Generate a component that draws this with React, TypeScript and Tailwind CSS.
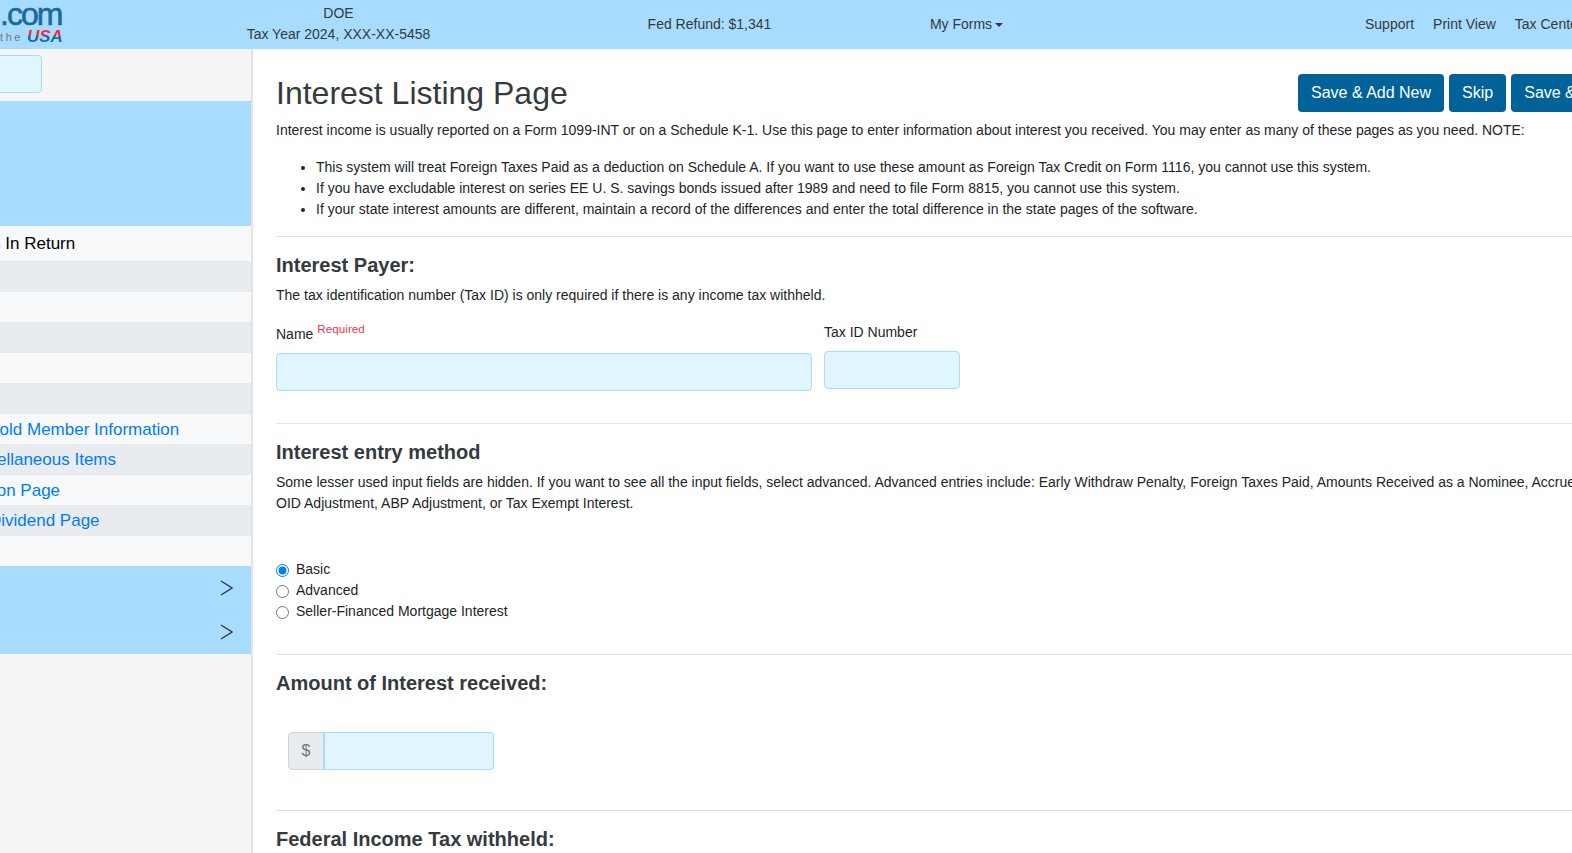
const sideRows = [
  { label: "Items In Return", offset: "-ml-[41px]", color: "text-black", shade: false, height: "h-[35px]" },
  { label: "", offset: "", color: "", shade: true, height: "h-[31px]" },
  { label: "", offset: "", color: "", shade: false, height: "h-[30px]" },
  { label: "", offset: "", color: "", shade: true, height: "h-[31px]" },
  { label: "", offset: "", color: "", shade: false, height: "h-[30px]" },
  { label: "", offset: "", color: "", shade: true, height: "h-[31px]" },
  { label: "Household Member Information", offset: "-ml-[59px]", color: "text-[#007bff]", shade: false, height: "h-[30px]" },
  { label: "Miscellaneous Items", offset: "-ml-[38px]", color: "text-[#007bff]", shade: true, height: "h-[31px]" },
  { label: "Education Page", offset: "-ml-[60px]", color: "text-[#007bff]", shade: false, height: "h-[30px]" },
  { label: "Dividend Page", offset: "-ml-[11px]", color: "text-[#007bff]", shade: true, height: "h-[31px]" },
  { label: "", offset: "", color: "", shade: false, height: "h-[30px]" },
];

function Chevron() {
  return (
    <svg width="13" height="16" viewBox="0 0 13 16" fill="none" stroke="#343a40" strokeWidth="1.4">
      <polyline points="1,1 12,8 1,15" />
    </svg>
  );
}

function Header() {
  return (
    <header className="flex h-[49px] shrink-0 items-center bg-[#a8dcff] text-[14px] text-[#343a40]">
      <div className="w-[231px] shrink-0 self-start">
        <div className="-mt-[2px] h-[31px] text-[32px] leading-[32px] tracking-[-2px] text-[#1b6a9e] [-webkit-text-stroke:0.6px_#1b6a9e]">.com</div>
        <div className="flex items-center whitespace-nowrap">
          <span className="w-[27px] shrink-0 text-[11px] leading-[15px] tracking-[2.6px] text-[#777]">the</span>
          <span className="bg-gradient-to-b from-[#ee2a3c] from-45% to-[#1b6a9e] to-45% bg-clip-text text-[17px] font-bold italic leading-[16px] text-transparent">USA</span>
        </div>
      </div>
      <div className="-mt-[2px] w-[215px] shrink-0 text-center leading-[21px]">
        <div>DOE</div>
        <div>Tax Year 2024, XXX-XX-5458</div>
      </div>
      <div className="ml-[156px] w-[215px] shrink-0 text-center">Fed Refund: $1,341</div>
      <div className="ml-[42px] flex w-[215px] shrink-0 items-center justify-center">
        My Forms
        <span className="ml-[3px] border-x-[4px] border-t-[4px] border-x-transparent border-t-[#343a40]" />
      </div>
      <div className="flex shrink-0 gap-[19px] pl-[291px] whitespace-nowrap">
        <span>Support</span>
        <span>Print View</span>
        <span>Tax Center</span>
      </div>
    </header>
  );
}

function Sidebar() {
  return (
    <aside className="flex w-[253px] shrink-0 flex-col overflow-hidden border-r-2 border-[#e4e4e4] bg-[#f5f5f5]">
      <div className="h-[52px] pt-[6px]">
        <div className="-ml-[60px] h-[38px] w-[102px] rounded border border-[#a8dcff] bg-[#dff5ff]" />
      </div>
      <div className="h-[125px] bg-[#a8dcff]" />
      {sideRows.map((row, i) => (
        <div
          key={i}
          className={`flex items-center whitespace-nowrap text-[17px] ${row.height} ${row.shade ? "bg-[#e9ecef]" : "bg-[#f8f9fa]"} ${row.color}`}
        >
          {row.label && <span className={row.offset}>{row.label}</span>}
        </div>
      ))}
      <div className="flex h-[44px] items-center justify-end bg-[#a8dcff] pr-[18px]"><Chevron /></div>
      <div className="flex h-[44px] items-center justify-end bg-[#a8dcff] pr-[18px]"><Chevron /></div>
    </aside>
  );
}

function Field({ className }: { className: string }) {
  return <input type="text" className={`block h-[38px] rounded border border-[#a8dcff] bg-[#dff5ff] ${className}`} />;
}

function Radio({ label, checked }: { label: string; checked?: boolean }) {
  return (
    <label className="flex h-[21px] items-center">
      <input type="radio" name="method" defaultChecked={checked} className="m-0 mt-[2px] h-[13px] w-[13px] accent-[#007bff]" />
      <span className="ml-[7px]">{label}</span>
    </label>
  );
}

export default function App() {
  return (
    <div className="flex h-[853px] w-full flex-col overflow-hidden bg-white font-['Liberation_Sans',Arial,sans-serif] text-[14px] leading-[21px] text-[#212529]">
      <Header />
      <div className="flex min-h-0 flex-1">
        <Sidebar />
        <main className="min-w-0 flex-1 overflow-hidden pl-[23px]">
          <div className="mt-[25px] flex h-[38px] items-center">
            <h1 className="w-[1022px] shrink-0 text-[32px] leading-[38px] text-[#343a40]">Interest Listing Page</h1>
            <div className="flex shrink-0 gap-[5px] text-[16px] text-white">
              <button className="h-[38px] rounded bg-[#006298] px-[13px] pb-[2px]">Save &amp; Add New</button>
              <button className="h-[38px] rounded bg-[#006298] px-[13px] pb-[2px]">Skip</button>
              <button className="h-[38px] whitespace-nowrap rounded bg-[#006298] px-[13px] pb-[2px]">Save &amp; Continue</button>
            </div>
          </div>
          <p className="mt-[8px] whitespace-nowrap">
            Interest income is usually reported on a Form 1099-INT or on a Schedule K-1. Use this page to enter information about interest you received. You may enter as many of these pages as you need. NOTE:
          </p>
          <ul className="mt-[16px] list-disc pl-[40px] whitespace-nowrap">
            <li>This system will treat Foreign Taxes Paid as a deduction on Schedule A. If you want to use these amount as Foreign Tax Credit on Form 1116, you cannot use this system.</li>
            <li>If you have excludable interest on series EE U. S. savings bonds issued after 1989 and need to file Form 8815, you cannot use this system.</li>
            <li>If your state interest amounts are different, maintain a record of the differences and enter the total difference in the state pages of the software.</li>
          </ul>
          <hr className="mt-[16px] border-[#e2e2e2]" />

          <h3 className="mt-[16px] text-[20px] font-bold leading-[24px] text-[#343a40]">Interest Payer:</h3>
          <p className="mt-[8px]">The tax identification number (Tax ID) is only required if there is any income tax withheld.</p>
          <div className="mt-[13px] flex items-start gap-[12px]">
            <div className="w-[536px] shrink-0">
              <div className="flex h-[34px] items-end pb-[8px]">
                Name
                <span className="mb-[10px] ml-[4px] text-[11.7px] leading-[12px] text-[#e8384f]">Required</span>
              </div>
              <Field className="w-full" />
            </div>
            <div>
              <div className="flex h-[32px] items-end pb-[8px]">Tax ID Number</div>
              <Field className="w-[136px]" />
            </div>
          </div>
          <hr className="mt-[32px] border-[#e2e2e2]" />

          <h3 className="mt-[16px] text-[20px] font-bold leading-[24px] text-[#343a40]">Interest entry method</h3>
          <p className="mt-[8px] whitespace-nowrap">
            Some lesser used input fields are hidden. If you want to see all the input fields, select advanced. Advanced entries include: Early Withdraw Penalty, Foreign Taxes Paid, Amounts Received as a Nominee, Accrued Market Discount,
            <br />
            OID Adjustment, ABP Adjustment, or Tax Exempt Interest.
          </p>
          <div className="mt-[45px]">
            <Radio label="Basic" checked />
            <Radio label="Advanced" />
            <Radio label="Seller-Financed Mortgage Interest" />
          </div>
          <hr className="mt-[32px] border-[#e2e2e2]" />

          <h3 className="mt-[16px] text-[20px] font-bold leading-[24px] text-[#343a40]">Amount of Interest received:</h3>
          <div className="ml-[12px] mt-[37px] flex h-[38px] w-[206px]">
            <span className="flex w-[36px] items-center justify-center rounded-l border border-[#ced4da] bg-[#e9ecef] pb-[1px] text-[16px] text-[#6c757d]">$</span>
            <input type="text" className="-ml-[1px] min-w-0 flex-1 rounded-r border-y border-r border-l-2 border-[#a8dcff] bg-[#dff5ff]" />
          </div>
          <hr className="mt-[40px] border-[#e2e2e2]" />

          <h3 className="mt-[16px] text-[20px] font-bold leading-[24px] text-[#343a40]">Federal Income Tax withheld:</h3>
        </main>
      </div>
    </div>
  );
}
